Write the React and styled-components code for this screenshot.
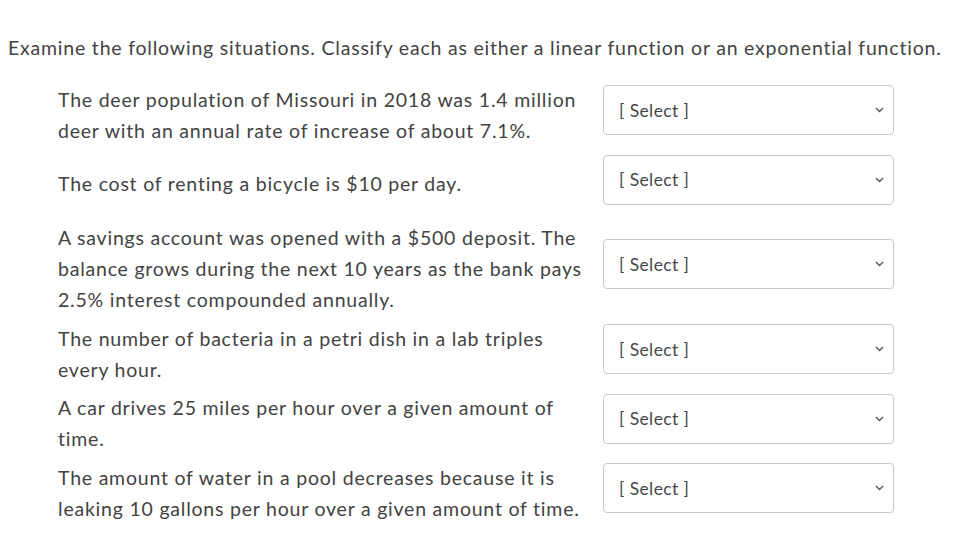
import React from "react";
import styled, { createGlobalStyle } from "styled-components";

const Global = createGlobalStyle`
  html, body { margin: 0; padding: 0; background: #fff; }
  body { padding: 8px; font-family: Lato, "Open Sans", sans-serif; color: #434343; }
`;

const Page = styled.div`
  display: flex;
  flex-direction: column;
`;

const Prompt = styled.p`
  margin: 28px 0 0 0;
  font-size: 19.5px;
  line-height: 24px;
  letter-spacing: 0.79px;
`;

const Table = styled.div`
  display: grid;
  grid-template-columns: 545px 291px;
  margin: 20px 0 0 50px;
`;

const Question = styled.div`
  display: flex;
  align-items: center;
  box-sizing: border-box;
  padding: 3.5px 15px 4px 0;
  font-size: 19.5px;
  line-height: 31px;
  letter-spacing: 0.78px;
`;

const Cell = styled.div`
  display: flex;
  align-items: center;
  padding: 5px 0;
`;

const SelectBox = styled.div`
  box-sizing: border-box;
  width: 291px;
  height: 50px;
  margin-bottom: 9px;
  border: 1px solid #c8c8c8;
  border-radius: 4px;
  background: #fff;
  display: flex;
  align-items: center;
  justify-content: space-between;
  padding: 0 9px 0 15px;
  font-size: 17.5px;
  letter-spacing: 0.4px;
  color: #474747;
`;

const Chevron = () => (
  <svg width="9" height="6" viewBox="0 0 9 6">
    <path d="M1 1l3.5 3.5L8 1" fill="none" stroke="#555" strokeWidth="1.4" />
  </svg>
);

const items = [
  "The deer population of Missouri in 2018 was 1.4 million deer with an annual rate of increase of about 7.1%.",
  "The cost of renting a bicycle is $10 per day.",
  "A savings account was opened with a $500 deposit. The balance grows during the next 10 years as the bank pays 2.5% interest compounded annually.",
  "The number of bacteria in a petri dish in a lab triples every hour.",
  "A car drives 25 miles per hour over a given amount of time.",
  "The amount of water in a pool decreases because it is leaking 10 gallons per hour over a given amount of time.",
];

export default function App() {
  return (
    <Page>
      <Global />
      <Prompt>
        Examine the following situations. Classify each as either a linear function or an exponential function.
      </Prompt>
      <Table>
        {items.map((t, i) => (
          <React.Fragment key={i}>
            <Question>{t}</Question>
            <Cell>
              <SelectBox>
                <span>[ Select ]</span>
                <Chevron />
              </SelectBox>
            </Cell>
          </React.Fragment>
        ))}
      </Table>
    </Page>
  );
}
